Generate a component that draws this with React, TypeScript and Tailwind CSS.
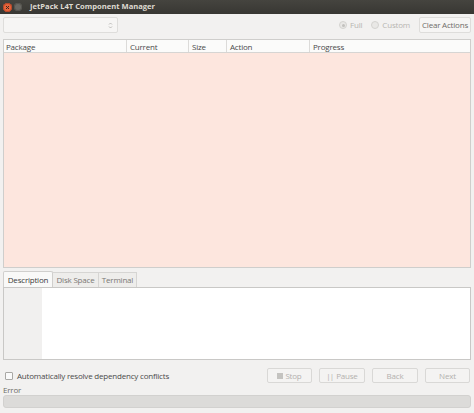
import React from "react";

const font = { fontFamily: '"Open Sans", "Noto Sans", sans-serif' };

function Btn({ children, className = "" }: { children: React.ReactNode; className?: string }) {
  return (
    <div
      className={`flex h-[15px] items-center justify-center rounded-[2px] border border-[#d9d8d6] bg-[#f4f3f2] text-[8px] text-[#b3b1ae] ${className}`}
    >
      {children}
    </div>
  );
}

export default function App() {
  return (
    <div
      className="flex h-[413px] w-[474px] flex-col overflow-hidden bg-[#f2f1f0] text-[8px] tracking-[-0.2px] text-[#3c3c3c]"
      style={font}
    >
      {/* Title bar */}
      <div className="flex h-[14px] items-center bg-gradient-to-b from-[#45443f] to-[#383733] pl-[3px]">
        <div className="flex h-[9px] w-[9px] items-center justify-center rounded-full bg-[#e9643a] shadow-[inset_0_0_0_1px_#b5482a]">
          <svg width="5" height="5" viewBox="0 0 5 5">
            <path d="M1 1L4 4M4 1L1 4" stroke="#3a2a25" strokeWidth="1" />
          </svg>
        </div>
        <div className="ml-[2px] h-[8px] w-[8px] rounded-full bg-[#6a6964] shadow-[inset_0_0_0_1px_#55544f]" />
        <div className="ml-[8px] text-[7.6px] font-bold tracking-[0px] text-[#dfdbd2]">JetPack L4T Component Manager</div>
      </div>

      {/* Toolbar */}
      <div className="mt-[3px] flex h-[16px] items-center px-[3px]">
        <div className="relative h-[16px] w-[115px] rounded-[2px] border border-[#dedddb] bg-[#f6f5f4]">
          <svg className="absolute right-[4px] top-[3px]" width="5" height="9" viewBox="0 0 5 9">
            <path d="M1 3.5L2.5 2L4 3.5M1 5.5L2.5 7L4 5.5" stroke="#b0aeab" strokeWidth="0.8" fill="none" />
          </svg>
        </div>
        <div className="ml-auto flex items-center gap-[9px] text-[#b7b5b1]">
          <div className="flex items-center gap-[3px]">
            <div className="flex h-[8px] w-[8px] items-center justify-center rounded-full border border-[#d4d3d0] bg-[#e9e8e6]">
              <div className="h-[3px] w-[3px] rounded-full bg-[#c2c1be]" />
            </div>
            <span>Full</span>
          </div>
          <div className="flex items-center gap-[3px]">
            <div className="h-[8px] w-[8px] rounded-full border border-[#d4d3d0] bg-[#e9e8e6]" />
            <span>Custom</span>
          </div>
          <div className="flex h-[16px] w-[52px] items-center justify-center rounded-[2px] border border-[#dedddb] bg-[#f6f5f4] text-[#6e6c68]">
            Clear Actions
          </div>
        </div>
      </div>

      {/* Table */}
      <div className="mx-[3px] mt-[6px] flex h-[229px] flex-col border border-[#cfcecc] bg-[#fde6de]">
        <div className="flex h-[13px] border-b border-[#d6d5d3] bg-[#fbfbfa] text-[#4a4a4a]">
          <div className="w-[123px] border-r border-[#dcdbd9] pl-[2px] leading-[13px]">Package</div>
          <div className="w-[62px] border-r border-[#dcdbd9] pl-[3px] leading-[13px]">Current</div>
          <div className="w-[38px] border-r border-[#dcdbd9] pl-[3px] leading-[13px]">Size</div>
          <div className="w-[83px] border-r border-[#dcdbd9] pl-[3px] leading-[13px]">Action</div>
          <div className="flex-1 pl-[3px] leading-[13px]">Progress</div>
        </div>
      </div>

      {/* Tabs */}
      <div className="mx-[3px] mt-[3px] flex h-[16px] items-end">
        <div className="flex h-[16px] w-[50px] items-center justify-center rounded-t-[2px] border border-b-0 border-[#d0cfcd] bg-[#f9f9f8] text-[#3c3c3c]">
          Description
        </div>
        <div className="flex h-[15px] w-[46px] items-center justify-center border border-b-0 border-l-0 border-[#d6d5d3] bg-[#eeedeb] text-[#7a7875]">
          Disk Space
        </div>
        <div className="flex h-[15px] w-[38px] items-center justify-center border border-b-0 border-l-0 border-[#d6d5d3] bg-[#eeedeb] text-[#7a7875]">
          Terminal
        </div>
      </div>

      {/* Text area */}
      <div className="mx-[3px] flex h-[73px] border border-[#c9c8c6] bg-white">
        <div className="w-[38px] bg-[#f1f0ef]" />
        <div className="flex-1" />
      </div>

      {/* Buttons row */}
      <div className="mt-[8px] flex h-[15px] items-center pl-[5px] pr-[4px]">
        <div className="h-[8px] w-[8px] rounded-[1px] border border-[#a9a8a5] bg-[#fafafa]" />
        <span className="ml-[4px] text-[#4a4a4a]">Automatically resolve dependency conflicts</span>
        <div className="ml-auto flex gap-[7px]">
          <Btn className="w-[45px]">
            <span className="mr-[2px] inline-block h-[6px] w-[6px] bg-[#c4c3c0]" />
            Stop
          </Btn>
          <Btn className="w-[46px]">
            <span className="mr-[3px] tracking-[-1px]">||</span>
            Pause
          </Btn>
          <Btn className="w-[46px]">Back</Btn>
          <Btn className="w-[45px]">Next</Btn>
        </div>
      </div>

      {/* Error */}
      <div className="mt-[2px] h-[10px] pl-[3px] leading-[10px] text-[#6e6c68]">Error</div>
      <div className="mx-[3px] h-[13px] rounded-[3px] border border-[#d2d1cf] bg-[#dcdbd9]" />
    </div>
  );
}
